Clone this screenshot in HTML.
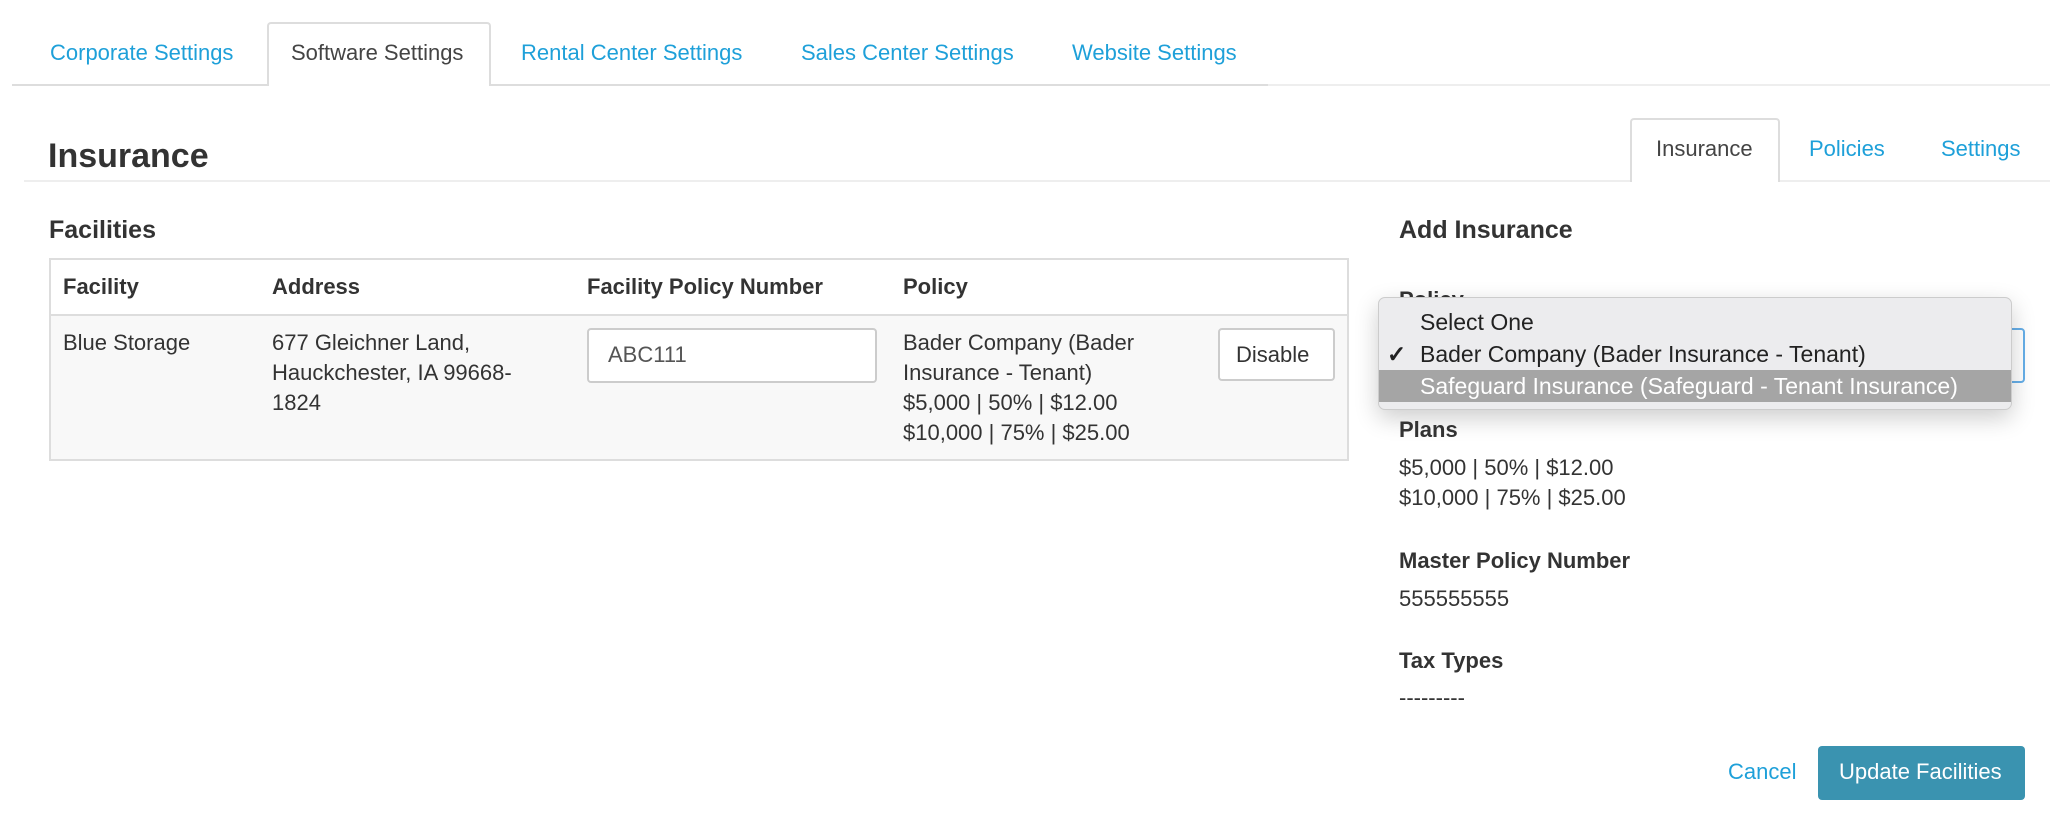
<!DOCTYPE html>
<html><head><meta charset="utf-8"><style>
*{box-sizing:border-box;margin:0;padding:0}
body{width:2070px;height:814px;background:#fff;font-family:"Liberation Sans",Arial,sans-serif;color:#333;position:relative;overflow:hidden}
.a{position:absolute;white-space:nowrap}
.l{color:#1ea0d9}
.t{font-size:22px;line-height:26px}
.d{font-size:23px;line-height:26px}
.b{font-weight:bold}
</style></head><body>
<!-- top tabs -->
<div class="a" style="left:12px;top:84px;width:1256px;height:2px;background:#ddd"></div>
<div class="a" style="left:1268px;top:84px;width:782px;height:2px;background:#eee"></div>
<div class="a" style="left:267px;top:22px;width:224px;height:64px;border:2px solid #ddd;border-bottom:none;border-radius:4px 4px 0 0;background:#fff"></div>
<div class="a t l" style="left:50px;top:40px">Corporate Settings</div>
<div class="a t" style="left:291px;top:40px;color:#444">Software Settings</div>
<div class="a t l" style="left:521px;top:40px">Rental Center Settings</div>
<div class="a t l" style="left:801px;top:40px">Sales Center Settings</div>
<div class="a t l" style="left:1072px;top:40px">Website Settings</div>
<!-- heading -->
<div class="a b" style="left:48px;top:135px;font-size:34px;line-height:42px;color:#333">Insurance</div>
<div class="a" style="left:24px;top:180px;width:2026px;height:2px;background:#eee"></div>
<div class="a" style="left:1630px;top:118px;width:150px;height:64px;border:2px solid #ddd;border-bottom:none;border-radius:4px 4px 0 0;background:#fff"></div>
<div class="a t" style="left:1656px;top:136px;color:#444">Insurance</div>
<div class="a t l" style="left:1809px;top:136px">Policies</div>
<div class="a t l" style="left:1941px;top:136px">Settings</div>
<!-- facilities -->
<div class="a b" style="left:49px;top:216px;font-size:25px">Facilities</div>
<div class="a" style="left:49px;top:258px;width:1300px;height:203px;border:2px solid #ddd;background:#fff"></div>
<div class="a" style="left:51px;top:314px;width:1296px;height:145px;background:#f8f8f8;border-top:2px solid #ddd"></div>
<div class="a t b" style="left:63px;top:274px">Facility</div>
<div class="a t b" style="left:272px;top:274px">Address</div>
<div class="a t b" style="left:587px;top:274px">Facility Policy Number</div>
<div class="a t b" style="left:903px;top:274px">Policy</div>
<div class="a t" style="left:63px;top:330px">Blue Storage</div>
<div class="a t" style="left:272px;top:328px;line-height:30px">677 Gleichner Land,<br>Hauckchester, IA 99668-<br>1824</div>
<div class="a" style="left:587px;top:328px;width:290px;height:55px;border:2px solid #ccc;border-radius:4px;background:#fff"></div>
<div class="a t" style="left:608px;top:342px;color:#555">ABC111</div>
<div class="a t" style="left:903px;top:328px;line-height:30px">Bader Company (Bader<br>Insurance - Tenant)<br>$5,000 | 50% | $12.00<br>$10,000 | 75% | $25.00</div>
<div class="a" style="left:1218px;top:328px;width:117px;height:53px;border:2px solid #ccc;border-radius:4px;background:#fff"></div>
<div class="a t" style="left:1236px;top:342px">Disable</div>
<!-- right panel -->
<div class="a b" style="left:1399px;top:216px;font-size:25px">Add Insurance</div>
<div class="a t b" style="left:1399px;top:287px">Policy</div>
<div class="a" style="left:1399px;top:328px;width:626px;height:55px;border:2px solid #66afe9;border-radius:4px;background:#fff"></div>
<div class="a" style="left:1378px;top:297px;width:634px;height:113px;background:#ececee;border:1px solid #ccc;border-radius:7px;box-shadow:0 8px 24px rgba(0,0,0,.2)"></div>
<div class="a" style="left:1379px;top:370px;width:632px;height:32px;background:#a5a5a5"></div>
<div class="a d" style="left:1420px;top:309px;color:#222">Select One</div>
<div class="a d b" style="left:1387px;top:341px;color:#222">✓</div>
<div class="a d" style="left:1420px;top:341px;color:#222">Bader Company (Bader Insurance - Tenant)</div>
<div class="a d" style="left:1420px;top:373px;color:#fff">Safeguard Insurance (Safeguard - Tenant Insurance)</div>
<div class="a t b" style="left:1399px;top:417px">Plans</div>
<div class="a t" style="left:1399px;top:453px;line-height:30px">$5,000 | 50% | $12.00<br>$10,000 | 75% | $25.00</div>
<div class="a t b" style="left:1399px;top:548px">Master Policy Number</div>
<div class="a t" style="left:1399px;top:586px">555555555</div>
<div class="a t b" style="left:1399px;top:648px">Tax Types</div>
<div class="a t" style="left:1399px;top:685px">---------</div>
<div class="a t l" style="left:1728px;top:759px">Cancel</div>
<div class="a" style="left:1818px;top:746px;width:207px;height:54px;background:#3a93b0;border-radius:4px"></div>
<div class="a t" style="left:1839px;top:759px;color:#fff">Update Facilities</div>
</body></html>
